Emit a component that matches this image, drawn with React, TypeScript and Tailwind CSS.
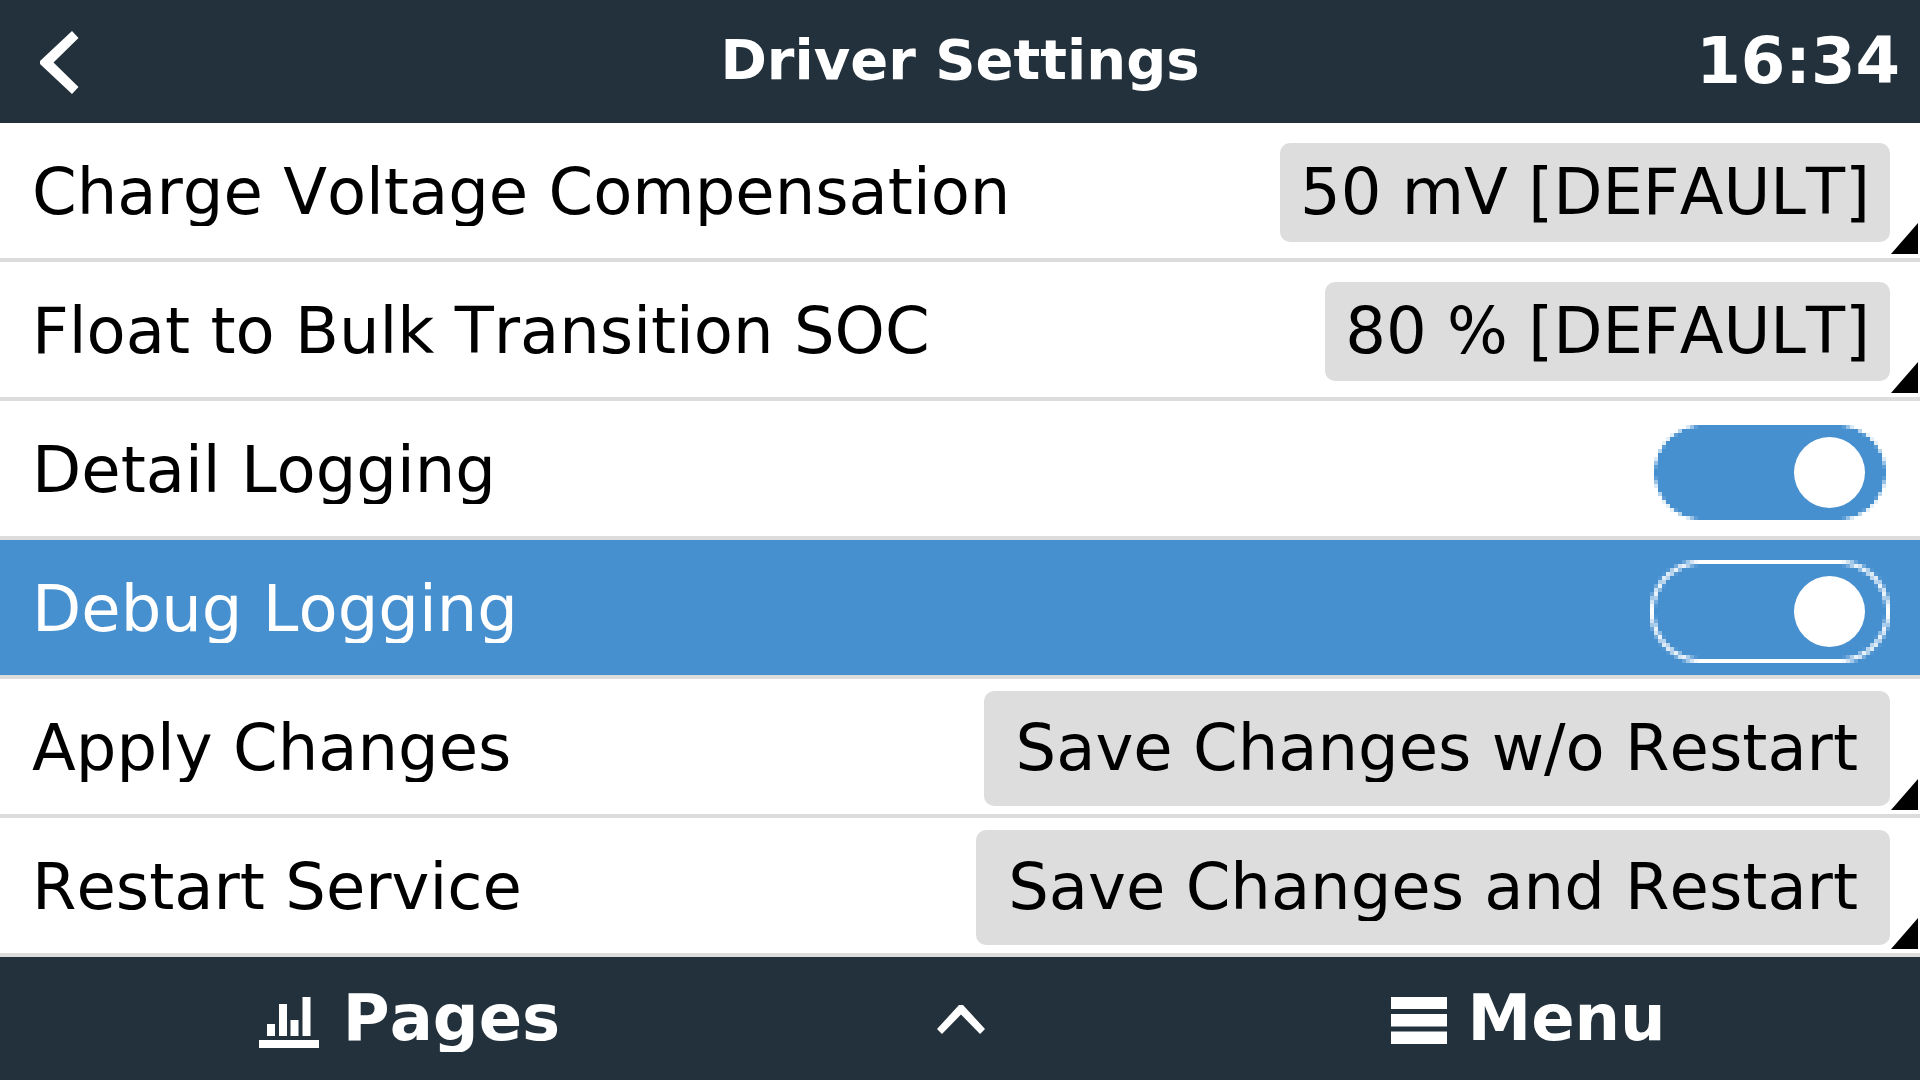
import { useState } from "react";
import type { ReactNode } from "react";

const COLS = 60;
const ROWS = 26;

function insidePill(x: number, y: number, inset: number) {
  const r = ROWS / 2 - inset;
  const cx = Math.min(Math.max(x, ROWS / 2), COLS - ROWS / 2);
  return (x - cx) ** 2 + (y - ROWS / 2) ** 2 <= r * r;
}

type Cell = { x: number; y: number; ring: number; fill: number };

// The switch body is a coarse 60 x 26 bitmap: each cell holds how much of it
// belongs to the outline and how much to the filled inside.
function buildCells(): Cell[] {
  const cells: Cell[] = [];
  const n = 4;
  for (let y = 0; y < ROWS; y++) {
    for (let x = 0; x < COLS; x++) {
      let outer = 0;
      let inner = 0;
      for (let i = 0; i < n; i++) {
        for (let j = 0; j < n; j++) {
          const px = x + (i + 0.5) / n;
          const py = y + (j + 0.5) / n;
          if (insidePill(px, py, 0)) outer++;
          if (insidePill(px, py, 1)) inner++;
        }
      }
      if (outer > 0) {
        cells.push({ x, y, ring: (outer - inner) / (n * n), fill: inner / (n * n) });
      }
    }
  }
  return cells;
}

const CELLS = buildCells();

function Toggle({ id }: { id: string }) {
  const [on, setOn] = useState(true);
  return (
    <label htmlFor={id} className="relative mt-1 block shrink-0 cursor-pointer">
      <input
        id={id}
        type="checkbox"
        role="switch"
        checked={on}
        onChange={() => setOn(!on)}
        className="sr-only"
      />
      <svg width="240" height="103" viewBox="0 0 240 103" aria-hidden="true">
        <svg width="240" height="103" viewBox="0 0 60 26" preserveAspectRatio="none" shapeRendering="crispEdges">
          {CELLS.map((c) => (
            <g key={c.y * COLS + c.x}>
              {c.fill > 0 && (
                <rect x={c.x} y={c.y} width="1" height="1" fill={on ? "#4790d0" : "#dddddd"} fillOpacity={c.fill} />
              )}
              {c.ring > 0 && <rect x={c.x} y={c.y} width="1" height="1" fill="#ffffff" fillOpacity={c.ring} />}
            </g>
          ))}
        </svg>
        <circle cx={on ? 179.5 : 60.5} cy="51.5" r="35.5" fill="#ffffff" />
      </svg>
    </label>
  );
}

function Corner() {
  return (
    <svg className="absolute right-0.5 bottom-2" width="27" height="31" viewBox="0 0 27 31" aria-hidden="true">
      <path d="M0 31L27 0V31Z" fill="#000000" />
    </svg>
  );
}

const labelClip = "whitespace-nowrap [clip-path:inset(0_0_4px_0)]";

function Row({
  label,
  htmlFor,
  active = false,
  corner = false,
  children,
}: {
  label: string;
  htmlFor: string;
  active?: boolean;
  corner?: boolean;
  children: ReactNode;
}) {
  return (
    <li
      className={
        "relative flex h-[139px] items-center justify-between pr-[30px] pl-8 shadow-[inset_0_-4px_0_#dcdcdc] " +
        (active ? "bg-[#4790d0] text-white" : "bg-white text-black")
      }
    >
      <label htmlFor={htmlFor} className={labelClip}>
        {label}
      </label>
      {children}
      {corner && <Corner />}
    </li>
  );
}

function ValueButton({ id, children }: { id: string; children: ReactNode }) {
  return (
    <button id={id} type="button" className="flex h-[99px] items-center rounded-[10px] bg-[#dddddd] px-5 whitespace-nowrap">
      {children}
    </button>
  );
}

function ActionButton({ id, children }: { id: string; children: ReactNode }) {
  return (
    <button id={id} type="button" className="flex h-[115px] items-center rounded-[10px] bg-[#dddddd] px-8">
      <span className={labelClip}>{children}</span>
    </button>
  );
}

export default function App() {
  return (
    <div className="flex min-h-screen flex-col bg-white font-['DejaVu_Sans',sans-serif] text-[64px] leading-[75px] [font-kerning:none]">
      <header className="grid h-[123px] grid-cols-[1fr_auto_1fr] items-center bg-[#22313b] font-bold text-white">
        <button type="button" aria-label="Back" className="ml-10 justify-self-start pt-0.5">
          <svg width="39" height="63" viewBox="0 0 39 63" className="block" aria-hidden="true">
            <path d="M32 0L38.500 7L13.500 31.500L38.500 56L32 63L0 33V30Z" fill="#ffffff" />
          </svg>
        </button>
        <h1 className="pb-1 text-[56px] leading-[65px]">Driver Settings</h1>
        <time className="justify-self-end pr-5">16:34</time>
      </header>

      <main className="grow">
        <ul>
          <Row label="Charge Voltage Compensation" htmlFor="voltage" corner>
            <ValueButton id="voltage">50 mV [DEFAULT]</ValueButton>
          </Row>
          <Row label="Float to Bulk Transition SOC" htmlFor="soc" corner>
            <ValueButton id="soc">80 % [DEFAULT]</ValueButton>
          </Row>
          <Row label="Detail Logging" htmlFor="detail">
            <Toggle id="detail" />
          </Row>
          <Row label="Debug Logging" htmlFor="debug" active>
            <Toggle id="debug" />
          </Row>
          <Row label="Apply Changes" htmlFor="apply" corner>
            <ActionButton id="apply">Save Changes w/o Restart</ActionButton>
          </Row>
          <Row label="Restart Service" htmlFor="restart" corner>
            <ActionButton id="restart">Save Changes and Restart</ActionButton>
          </Row>
        </ul>
      </main>

      <footer className="grid h-[123px] grid-cols-[3fr_1fr_3fr] items-center bg-[#22313b] font-bold text-white">
        <button type="button" className="flex items-center justify-center gap-6 pr-1 font-bold">
          <svg width="60" height="51" viewBox="0 0 60 51" className="mt-2" aria-hidden="true">
            <path d="M0 43H60V51H0ZM8 27H16V39H8ZM20 7H28V39H20ZM31.500 23H39.500V39H31.500ZM43.500 0H51.500V39H43.500Z" fill="#ffffff" />
          </svg>
          <span className={labelClip}>Pages</span>
        </button>
        <button type="button" aria-label="Scroll up" className="justify-self-center pt-0.5 pl-0.5">
          <svg width="48" height="29" viewBox="0 0 48 29" className="block" aria-hidden="true">
            <path d="M22 0H26L48 24L43 29L24 9.500L5 29L0 24Z" fill="#ffffff" />
          </svg>
        </button>
        <button type="button" className="flex items-center justify-center gap-5 pl-10 font-bold">
          <svg width="56" height="47" viewBox="0 0 56 47" className="mt-1" aria-hidden="true">
            <path d="M0 0H56V12H0ZM0 17H56V29.500H0ZM0 34.500H56V47H0Z" fill="#ffffff" />
          </svg>
          <span className={labelClip}>Menu</span>
        </button>
      </footer>
    </div>
  );
}
